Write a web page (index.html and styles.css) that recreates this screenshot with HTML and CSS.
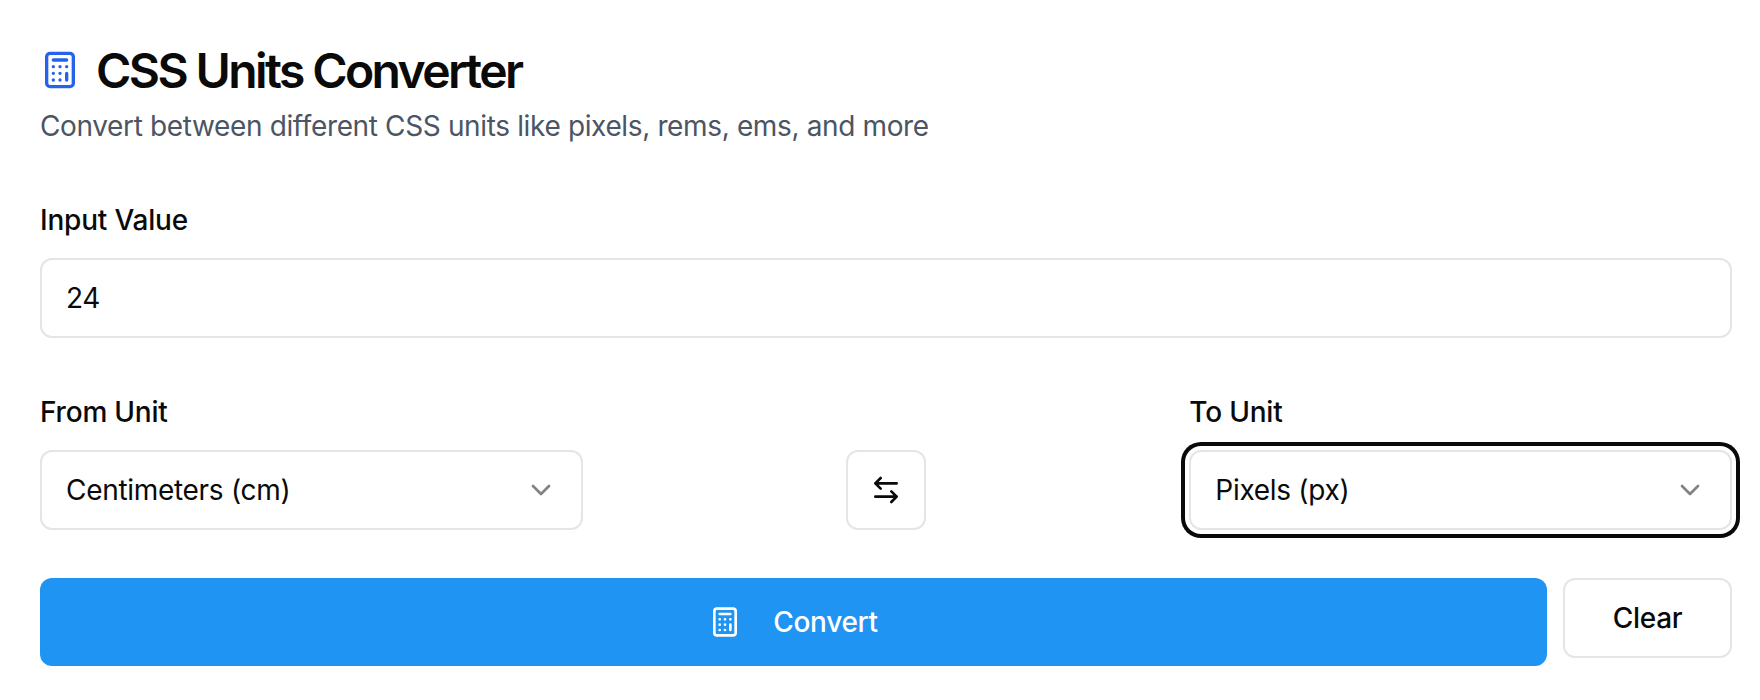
FILE: index.html
```
<!DOCTYPE html>
<html lang="en">
<head>
  <meta charset="UTF-8">
  <meta name="viewport" content="width=device-width, initial-scale=1.0">
  <title>CSS Units Converter</title>
  <link rel="stylesheet" href="styles.css">
</head>
<body>
  <main class="converter">
    <header class="header">
      <div class="title-row">
        <svg class="title-icon" viewBox="0 0 24 24">
          <rect width="16" height="20" x="4" y="2" rx="2" />
          <path d="M8 6h8M16 14v4M16 10h.01M12 10h.01M8 10h.01M12 14h.01M8 14h.01M12 18h.01M8 18h.01" />
        </svg>
        <h1>CSS Units Converter</h1>
      </div>
      <p class="subtitle">Convert between different CSS units like pixels, rems, ems, and more</p>
    </header>

    <div class="field">
      <label for="inputValue">Input Value</label>
      <input id="inputValue" class="control" type="text" value="24">
    </div>

    <div class="units">
      <div class="field">
        <label id="fromLabel">From Unit</label>
        <button class="control select" type="button" aria-labelledby="fromLabel">
          <span>Centimeters (cm)</span>
          <svg class="icon chevron" viewBox="0 0 24 24"><path d="m6 9 6 6 6-6" /></svg>
        </button>
      </div>

      <button class="swap-btn" type="button" aria-label="Swap units">
        <svg class="icon" viewBox="0 0 24 24">
          <path d="M8 3 4 7l4 4M4 7h16M16 21l4-4-4-4M20 17H4" />
        </svg>
      </button>

      <div class="field">
        <label id="toLabel">To Unit</label>
        <button class="control select focused" type="button" aria-labelledby="toLabel">
          <span>Pixels (px)</span>
          <svg class="icon chevron" viewBox="0 0 24 24"><path d="m6 9 6 6 6-6" /></svg>
        </button>
      </div>
    </div>

    <div class="actions">
      <button class="convert-btn" type="button">
        <svg class="icon" viewBox="0 0 24 24">
          <rect width="16" height="20" x="4" y="2" rx="2" />
          <path d="M8 6h8M16 14v4M16 10h.01M12 10h.01M8 10h.01M12 14h.01M8 14h.01M12 18h.01M8 18h.01" />
        </svg>
        <span>Convert</span>
      </button>
      <button class="clear-btn" type="button">Clear</button>
    </div>
  </main>
</body>
</html>
```

FILE: styles.css
```
* {
  box-sizing: border-box;
}

body {
  margin: 0;
  background-color: #fff;
  color: #0a0a0a;
  font-family: Inter, "Liberation Sans", sans-serif;
  font-size: 28px;
  line-height: 40px;
  letter-spacing: -0.3px;
}

button,
input {
  font: inherit;
  letter-spacing: inherit;
  color: inherit;
}

svg {
  flex-shrink: 0;
  fill: none;
  stroke: currentColor;
  stroke-width: 2;
  stroke-linecap: round;
  stroke-linejoin: round;
}

.converter {
  padding: 46px 28px 0 40px;
}

.header {
  margin-bottom: 54px;
}

.title-row {
  display: flex;
  align-items: center;
  gap: 16px;
  height: 48px;
}

.title-icon {
  width: 40px;
  height: 40px;
  color: #2563eb;
}

h1 {
  margin: 0;
  padding-top: 2px;
  font-size: 48px;
  font-weight: 600;
  line-height: 48px;
  letter-spacing: -2.6px;
}

.subtitle {
  margin: 12px 0 0;
  color: #4b5563;
  letter-spacing: -0.36px;
}

.field {
  display: flex;
  flex-direction: column;
  gap: 18px;
}

label {
  font-weight: 500;
  letter-spacing: -0.2px;
}

.control {
  width: 100%;
  height: 80px;
  padding: 0 24px;
  border: 2px solid #e5e5e5;
  border-radius: 12px;
  background-color: #fff;
}

.select {
  display: flex;
  align-items: center;
  justify-content: space-between;
}

.focused {
  box-shadow: 0 0 0 4px #fff, 0 0 0 8px #0a0a0a;
}

.icon {
  width: 32px;
  height: 32px;
}

.chevron {
  opacity: 0.5;
}

.units {
  display: grid;
  grid-template-columns: repeat(3, 1fr);
  align-items: end;
  gap: 32px;
  margin-top: 54px;
}

.swap-btn {
  display: flex;
  align-items: center;
  justify-content: center;
  justify-self: center;
  width: 80px;
  height: 80px;
  padding: 0;
  border: 2px solid #e5e5e5;
  border-radius: 12px;
  background-color: #fff;
}

.actions {
  display: flex;
  align-items: flex-start;
  gap: 16px;
  margin-top: 48px;
}

.convert-btn {
  display: flex;
  flex: 1;
  align-items: center;
  justify-content: center;
  gap: 32px;
  height: 88px;
  border: none;
  border-radius: 12px;
  background-color: #2094f3;
  color: #fff;
  font-weight: 500;
}

.clear-btn {
  width: 169px;
  height: 80px;
  padding: 0;
  border: 2px solid #e5e5e5;
  border-radius: 12px;
  background-color: #fff;
  font-weight: 500;
}
```
